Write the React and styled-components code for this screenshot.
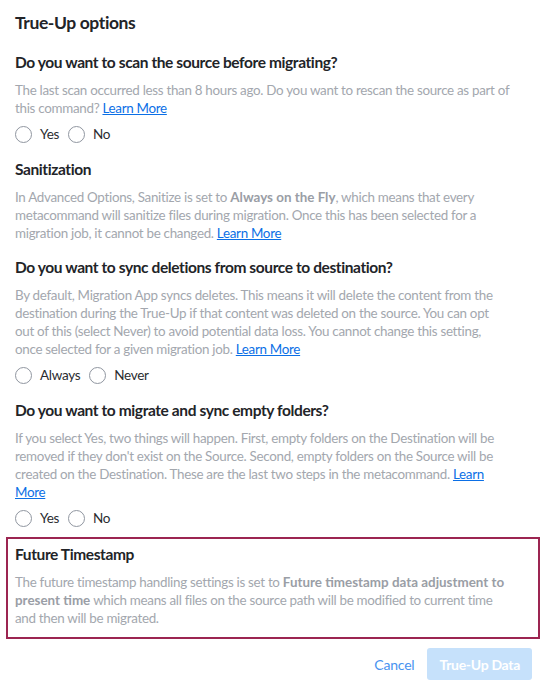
import React from "react";
import styled, { createGlobalStyle } from "styled-components";

const GlobalStyle = createGlobalStyle`
  body {
    margin: 0;
    background: #ffffff;
    font-family: "Lato", "Noto Sans", sans-serif;
  }
`;

const Panel = styled.div`
  width: 548px;
  box-sizing: border-box;
  padding: 11px 8px 0 6px;
  display: flex;
  flex-direction: column;
`;

const Title = styled.h2`
  margin: 0 0 16px 9px;
  font-size: 17.5px;
  line-height: 24px;
  font-weight: 700;
  letter-spacing: -0.4px;
  color: #222428;
`;

const Sections = styled.div`
  display: flex;
  flex-direction: column;
  gap: 14px;
`;

const Section = styled.section`
  padding: ${(p) => (p.$highlight ? "4px 7px 10px" : "0 9px")};
  border: ${(p) => (p.$highlight ? "2px solid #9c2551" : "none")};
  margin-top: ${(p) => (p.$highlight ? "-5px" : "0")};
`;

const Heading = styled.h3`
  margin: 0 0 8px;
  font-size: 15.5px;
  line-height: 22px;
  font-weight: 700;
  letter-spacing: -0.4px;
  color: #222428;
`;

const Body = styled.p`
  margin: 0;
  font-size: 13.4px;
  line-height: 18px;
  letter-spacing: -0.3px;
  color: #a3a7ae;

  b {
    font-weight: 700;
    letter-spacing: 0;
    color: #9a9ea6;
  }
`;

const Link = styled.a`
  color: #0b6fe6;
  text-decoration: underline;
  cursor: pointer;
`;

const RadioRow = styled.div`
  display: flex;
  align-items: center;
  gap: 9px;
  margin-top: 7px;
  height: 20px;
`;

const Option = styled.label`
  display: flex;
  align-items: center;
  gap: 8px;
  font-size: 13.5px;
  letter-spacing: -0.3px;
  color: #2a2c30;
  cursor: pointer;
`;

const Circle = styled.span`
  width: 17px;
  height: 17px;
  box-sizing: border-box;
  border: 1px solid #9096a0;
  border-radius: 50%;
  background: #fff;
`;

const Footer = styled.div`
  display: flex;
  justify-content: flex-end;
  align-items: center;
  gap: 13px;
  margin-top: 9px;
  padding-right: 8px;
`;

const TextButton = styled.button`
  border: none;
  background: none;
  padding: 0;
  font-family: inherit;
  font-size: 14px;
  letter-spacing: -0.2px;
  color: #4893f0;
  cursor: pointer;
`;

const PrimaryButton = styled.button`
  height: 32px;
  padding: 0 12px;
  border: none;
  border-radius: 3px;
  background: #c6e1fb;
  color: #ffffff;
  font-family: inherit;
  font-size: 14px;
  font-weight: 700;
  letter-spacing: -0.3px;
`;

const Radios = ({ options }) => (
  <RadioRow>
    {options.map((o) => (
      <Option key={o}>
        <Circle />
        {o}
      </Option>
    ))}
  </RadioRow>
);

export default function App() {
  return (
    <>
      <GlobalStyle />
      <Panel>
        <Title>True-Up options</Title>
        <Sections>
          <Section>
            <Heading>Do you want to scan the source before migrating?</Heading>
            <Body>
              The last scan occurred less than 8 hours ago. Do you want to rescan the source as part of
              <br />
              this command? <Link>Learn More</Link>
            </Body>
            <Radios options={["Yes", "No"]} />
          </Section>
          <Section>
            <Heading>Sanitization</Heading>
            <Body>
              In Advanced Options, Sanitize is set to <b>Always on the Fly</b>, which means that every
              <br />
              metacommand will sanitize files during migration. Once this has been selected for a
              <br />
              migration job, it cannot be changed. <Link>Learn More</Link>
            </Body>
          </Section>
          <Section>
            <Heading>Do you want to sync deletions from source to destination?</Heading>
            <Body>
              By default, Migration App syncs deletes. This means it will delete the content from the
              <br />
              destination during the True-Up if that content was deleted on the source. You can opt
              <br />
              out of this (select Never) to avoid potential data loss. You cannot change this setting,
              <br />
              once selected for a given migration job. <Link>Learn More</Link>
            </Body>
            <Radios options={["Always", "Never"]} />
          </Section>
          <Section>
            <Heading>Do you want to migrate and sync empty folders?</Heading>
            <Body>
              If you select Yes, two things will happen. First, empty folders on the Destination will be
              <br />
              removed if they don't exist on the Source. Second, empty folders on the Source will be
              <br />
              created on the Destination. These are the last two steps in the metacommand.{" "}
              <Link>
                Learn
                <br />
                More
              </Link>
            </Body>
            <Radios options={["Yes", "No"]} />
          </Section>
          <Section $highlight>
            <Heading>Future Timestamp</Heading>
            <Body>
              The future timestamp handling settings is set to{" "}
              <b>
                Future timestamp data adjustment to
                <br />
                present time
              </b>{" "}
              which means all files on the source path will be modified to current time
              <br />
              and then will be migrated.
            </Body>
          </Section>
        </Sections>
        <Footer>
          <TextButton>Cancel</TextButton>
          <PrimaryButton>True-Up Data</PrimaryButton>
        </Footer>
      </Panel>
    </>
  );
}
